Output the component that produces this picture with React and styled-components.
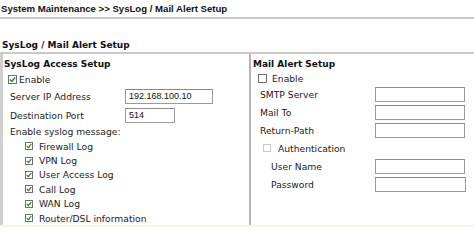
import React from 'react';
import styled, { createGlobalStyle } from 'styled-components';

const GlobalStyle = createGlobalStyle`
  html, body { margin: 0; padding: 0; background: #fff; }
  body { font-family: "DejaVu Sans", Verdana, sans-serif; color: #222; }
`;

const Page = styled.div`
  width: 474px;
  height: 227px;
  overflow: hidden;
  display: flex;
  flex-direction: column;
`;

const Breadcrumb = styled.div`
  height: 17px;
  line-height: 17px;
  padding-left: 1px;
  font-family: "Liberation Sans", Arial, sans-serif;
  font-weight: bold;
  font-size: 9.6px;
  color: #111;
  border-bottom: 2px solid #c9c9c9;
`;

const SectionTitle = styled.div`
  margin-top: 19px;
  height: 14px;
  line-height: 14px;
  padding-left: 2px;
  font-weight: bold;
  font-size: 9px;
  color: #111;
`;

const Table = styled.div`
  display: flex;
  border-top: 2px solid #c9c9c9;
  flex: 1;
`;

const Cell = styled.div`
  width: ${p => p.$width}px;
  box-sizing: border-box;
  padding-top: 3px;
  border-left: ${p => p.$left ? '3px solid #cfcfcf' : 'none'};
  border-right: ${p => p.$right ? '2px solid #b5b5b5' : 'none'};
  font-size: 9.2px;
`;

const CellTitle = styled.div`
  font-weight: bold;
  font-size: 9px;
  height: 14px;
  line-height: 14px;
  padding-left: ${p => p.$indent}px;
  color: #111;
`;

const CheckRow = styled.div`
  display: flex;
  align-items: center;
  gap: ${p => p.$gap}px;
  height: ${p => p.$h}px;
  padding-left: ${p => p.$indent}px;
`;

const Box = styled.span`
  width: ${p => p.$size}px;
  height: ${p => p.$size}px;
  box-sizing: border-box;
  border: 1px solid ${p => p.$faded ? '#c8c8c8' : '#707070'};
  background: #fff;
  display: inline-flex;
  align-items: center;
  justify-content: center;
`;

const FieldRow = styled.div`
  display: grid;
  grid-template-columns: ${p => p.$label}px auto;
  align-items: center;
  height: ${p => p.$h}px;
  padding-left: ${p => p.$indent}px;
`;

const Input = styled.div`
  width: ${p => p.$w}px;
  height: 15px;
  box-sizing: border-box;
  border: 1px solid #9a9a9a;
  border-top-color: #8a8a8a;
  background: #fff;
  font-family: "Liberation Sans", Arial, sans-serif;
  font-size: 9px;
  line-height: 13px;
  padding-left: 3px;
  color: #111;
`;

const Plain = styled.div`
  height: ${p => p.$h}px;
  line-height: ${p => p.$h}px;
  padding-left: ${p => p.$indent}px;
`;

const Footer = styled.div`
  height: 4px;
  background: #fbf3e6;
`;

function Check({ checked, size = 8, faded }) {
  return (
    <Box $size={size} $faded={faded}>
      {checked && (
        <svg width={size - 2} height={size - 2} viewBox="0 0 6 6">
          <path d="M0.8 3 L2.4 4.6 L5.3 1.2" fill="none" stroke="#2f8a2f" strokeWidth="1.3" />
        </svg>
      )}
    </Box>
  );
}

const logs = ['Firewall Log', 'VPN Log', 'User Access Log', 'Call Log', 'WAN Log', 'Router/DSL information'];

export default function App() {
  return (
    <Page>
      <GlobalStyle />
      <Breadcrumb>System Maintenance &gt;&gt; SysLog / Mail Alert Setup</Breadcrumb>
      <SectionTitle>SysLog / Mail Alert Setup</SectionTitle>
      <Table>
        <Cell $width={251} $left $right>
          <CellTitle $indent={1}>SysLog Access Setup</CellTitle>
          <CheckRow $indent={5} $gap={2} $h={16}>
            <Check checked size={9} />
            <span>Enable</span>
          </CheckRow>
          <FieldRow $label={115} $indent={7} $h={19}>
            <span>Server IP Address</span>
            <Input $w={88}>192.168.100.10</Input>
          </FieldRow>
          <FieldRow $label={115} $indent={7} $h={19}>
            <span>Destination Port</span>
            <Input $w={50}>514</Input>
          </FieldRow>
          <Plain $indent={7} $h={14}>Enable syslog message:</Plain>
          {logs.map(l => (
            <CheckRow key={l} $indent={22} $gap={6} $h={14.4}>
              <Check checked />
              <span>{l}</span>
            </CheckRow>
          ))}
        </Cell>
        <Cell $width={223}>
          <CellTitle $indent={2}>Mail Alert Setup</CellTitle>
          <CheckRow $indent={7} $gap={5} $h={14}>
            <Check size={9} />
            <span>Enable</span>
          </CheckRow>
          <FieldRow $label={115} $indent={9} $h={18}>
            <span>SMTP Server</span>
            <Input $w={90} />
          </FieldRow>
          <FieldRow $label={115} $indent={9} $h={18}>
            <span>Mail To</span>
            <Input $w={90} />
          </FieldRow>
          <FieldRow $label={115} $indent={9} $h={18}>
            <span>Return-Path</span>
            <Input $w={90} />
          </FieldRow>
          <CheckRow $indent={12} $gap={7} $h={18}>
            <Check size={8} faded />
            <span>Authentication</span>
          </CheckRow>
          <FieldRow $label={104} $indent={20} $h={18}>
            <span>User Name</span>
            <Input $w={90} />
          </FieldRow>
          <FieldRow $label={104} $indent={20} $h={18}>
            <span>Password</span>
            <Input $w={91} />
          </FieldRow>
        </Cell>
      </Table>
      <Footer />
    </Page>
  );
}
